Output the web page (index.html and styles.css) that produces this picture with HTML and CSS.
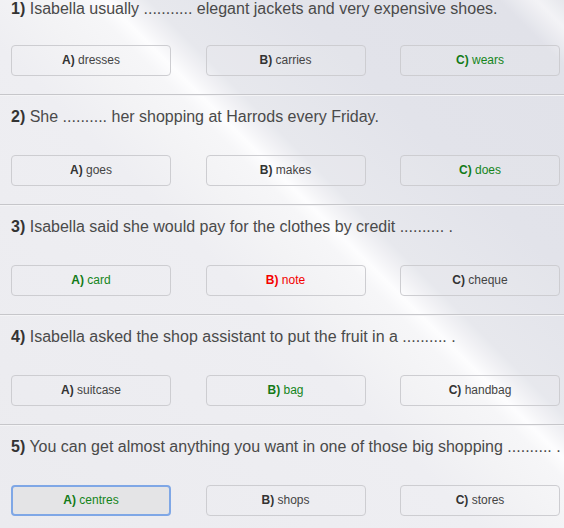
FILE: index.html
```html
<!DOCTYPE html>
<html lang="en">
<head>
<meta charset="utf-8">
<title>Quiz</title>
<link rel="stylesheet" href="styles.css">
</head>
<body>
<div class="quiz">
  <section class="item">
    <p class="question"><b>1)</b> Isabella usually ........... elegant jackets and very expensive shoes.</p>
    <div class="answers">
      <button class="answer"><b>A)</b> dresses</button>
      <button class="answer"><b>B)</b> carries</button>
      <button class="answer correct"><b>C)</b> wears</button>
    </div>
  </section>
  <section class="item">
    <p class="question"><b>2)</b> She .......... her shopping at Harrods every Friday.</p>
    <div class="answers">
      <button class="answer"><b>A)</b> goes</button>
      <button class="answer"><b>B)</b> makes</button>
      <button class="answer correct"><b>C)</b> does</button>
    </div>
  </section>
  <section class="item">
    <p class="question"><b>3)</b> Isabella said she would pay for the clothes by credit .......... .</p>
    <div class="answers">
      <button class="answer correct"><b>A)</b> card</button>
      <button class="answer wrong"><b>B)</b> note</button>
      <button class="answer"><b>C)</b> cheque</button>
    </div>
  </section>
  <section class="item">
    <p class="question"><b>4)</b> Isabella asked the shop assistant to put the fruit in a .......... .</p>
    <div class="answers">
      <button class="answer"><b>A)</b> suitcase</button>
      <button class="answer correct"><b>B)</b> bag</button>
      <button class="answer"><b>C)</b> handbag</button>
    </div>
  </section>
  <section class="item">
    <p class="question"><b>5)</b> You can get almost anything you want in one of those big shopping .......... .</p>
    <div class="answers">
      <button class="answer correct selected"><b>A)</b> centres</button>
      <button class="answer"><b>B)</b> shops</button>
      <button class="answer"><b>C)</b> stores</button>
    </div>
  </section>
</div>
</body>
</html>
```
FILE: styles.css
```css
html, body {
  margin: 0;
  padding: 0;
  width: 564px;
  height: 528px;
  overflow: hidden;
}

body {
  font-family: "Liberation Sans", Arial, sans-serif;
  background:
    linear-gradient(45deg,
      #ebebef 0%,
      #ededf1 30%,
      #eeeef2 44%,
      #f3f3f5 51%,
      #f6f6f8 56%,
      #fdfdfe 58%,
      #f4f4f7 59.5%,
      #e7e8ed 62%,
      #e2e3ea 75%,
      #e1e2e9 94%,
      #f3f3f6 97.5%,
      #e6e7ec 100%);
}

.quiz {
  margin-top: -16px;
}

.item {
  border-top: 1px solid #c6c6ca;
  box-shadow: inset 0 1px 0 #f4f4f6;
  padding: 12px 0 17px 11px;
  height: 80px;
}

.question {
  margin: 0 0 28px;
  font-size: 16px;
  line-height: 20px;
  color: #4a4a4a;
  white-space: nowrap;
}

.item:first-child .question {
  margin: 2px 0 26px;
}

.question b {
  color: #333;
}

.answers {
  display: grid;
  grid-template-columns: repeat(3, 160px);
  column-gap: 34.5px;
}

.answer {
  box-sizing: border-box;
  height: 31px;
  margin: 0;
  padding: 0 0 1px;
  border: 1px solid #cdcdd1;
  border-radius: 4px;
  background: rgba(255, 255, 255, 0.04);
  font-family: "Liberation Sans", Arial, sans-serif;
  font-size: 12px;
  color: #444;
  text-align: center;
}

.answer b {
  color: #333;
}

.answer.correct {
  color: #15851a;
}

.answer.correct b {
  color: #137a17;
}

.answer.wrong,
.answer.wrong b {
  color: #f40000;
}

.answer.selected {
  background: #e4e4e6;
  border: 2px solid #7fa7e6;
}
```
